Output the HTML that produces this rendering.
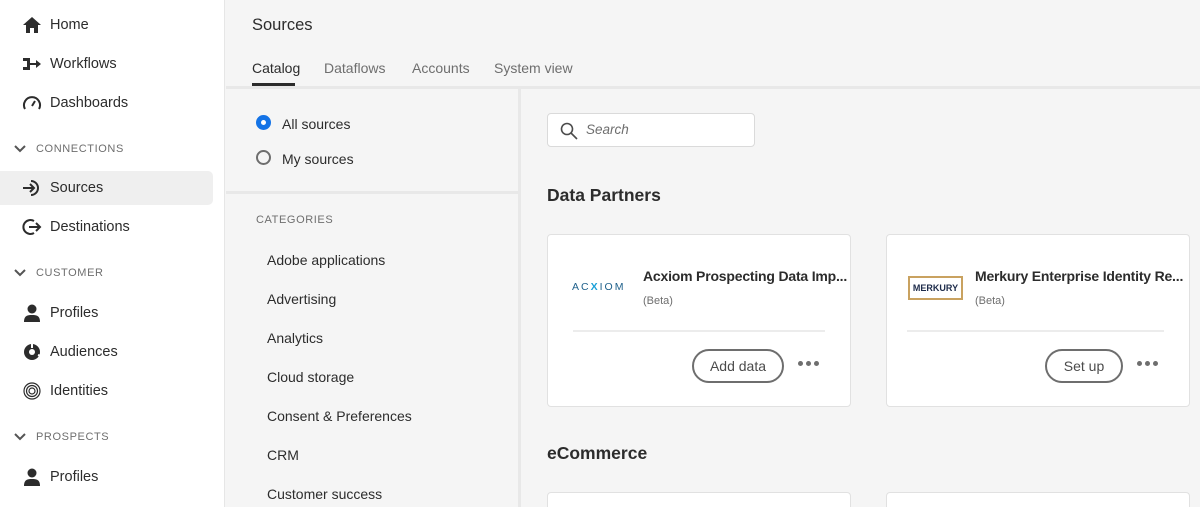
<!DOCTYPE html>
<html style="overflow:hidden;height:507px"><head><style>
*{box-sizing:border-box;margin:0;padding:0}
body{width:1200px;height:507px;overflow:hidden;font-family:"Liberation Sans",sans-serif;background:#f5f5f5;position:relative;color:#2c2c2c}
.side{position:absolute;left:0;top:0;width:225px;height:507px;background:#fff;border-right:1px solid #e6e6e6}
.it{position:absolute;left:0;height:34px;width:213px;display:flex;align-items:center;font-size:14.5px;color:#2c2c2c}
.it svg{position:absolute;left:22px}
.it span{position:absolute;left:50px;top:9px}
.sel{background:#efefef;border-radius:0 5px 5px 0}
.hd{position:absolute;left:14px;font-size:11px;letter-spacing:.6px;color:#6e6e6e;display:flex;align-items:center}
.hd b{font-weight:normal}
.abs{position:absolute}
.cat{position:absolute;left:267px;font-size:14px;color:#2c2c2c}
.card{position:absolute;background:#fff;border:1px solid #e1e1e1;border-radius:4px}
.ttl{position:absolute;font-size:14px;font-weight:bold;color:#2c2c2c;white-space:nowrap;overflow:hidden;text-overflow:ellipsis;letter-spacing:-.2px}
.beta{position:absolute;font-size:11px;color:#6e6e6e}
.btn{position:absolute;height:34px;border:2px solid #6e6e6e;border-radius:17px;font-size:14px;color:#4b4b4b;display:flex;align-items:center;justify-content:center}
.dots{position:absolute;top:126px;display:flex;gap:3px}
.dots i{width:5px;height:5px;border-radius:50%;background:#6e6e6e}
.hr{position:absolute;height:2px;background:#ececec}
</style></head><body>
<div class="side">
 <div class="it" style="top:8px"><svg width="20" height="18" viewBox="0 0 20 18"><path d="M10 1L1 9h3v8h4v-5h4v5h4V9h3z" fill="#2c2c2c"/></svg><span>Home</span></div>
 <div class="it" style="top:47px"><svg width="20" height="18" viewBox="0 0 20 18"><path d="M1 3h7v12H1v-3h4V6H1z M8 8h6V5l5 4-5 4v-3H8z" fill="#2c2c2c"/></svg><span>Workflows</span></div>
 <div class="it" style="top:86px"><svg width="20" height="18" viewBox="0 0 20 18"><path d="M3 15A8 8 0 1 1 17 15" fill="none" stroke="#2c2c2c" stroke-width="2"/><path d="M10 12l3-5" stroke="#2c2c2c" stroke-width="2"/></svg><span>Dashboards</span></div>
 <div class="hd" style="top:143px"><svg width="12" height="8"><path d="M1 1l5 5 5-5" fill="none" stroke="#555" stroke-width="2"/></svg><b style="margin-left:10px">CONNECTIONS</b></div>
 <div class="it sel" style="top:171px"><svg width="20" height="20" viewBox="0 0 20 20"><path d="M9 3a7 7 0 1 1 0 14" fill="none" stroke="#2c2c2c" stroke-width="2"/><path d="M1 10h11M8 6l4 4-4 4" fill="none" stroke="#2c2c2c" stroke-width="2"/></svg><span>Sources</span></div>
 <div class="it" style="top:210px"><svg width="20" height="20" viewBox="0 0 20 20"><path d="M12 4a7 7 0 1 0 0 12" fill="none" stroke="#2c2c2c" stroke-width="2"/><path d="M7 10h11M14 6l4 4-4 4" fill="none" stroke="#2c2c2c" stroke-width="2"/></svg><span>Destinations</span></div>
 <div class="hd" style="top:267px"><svg width="12" height="8"><path d="M1 1l5 5 5-5" fill="none" stroke="#555" stroke-width="2"/></svg><b style="margin-left:10px">CUSTOMER</b></div>
 <div class="it" style="top:296px"><svg width="20" height="20" viewBox="0 0 20 20"><circle cx="10" cy="6" r="4.5" fill="#2c2c2c"/><path d="M2 19c0-6 3-7 8-7s8 1 8 7z" fill="#2c2c2c"/></svg><span>Profiles</span></div>
 <div class="it" style="top:335px"><svg width="20" height="20" viewBox="0 0 20 20"><circle cx="10" cy="10" r="8" fill="#2c2c2c"/><circle cx="10" cy="10" r="3" fill="#fff"/><path d="M10 2v4M16 13l3 1" stroke="#fff" stroke-width="2"/></svg><span>Audiences</span></div>
 <div class="it" style="top:374px"><svg width="20" height="20" viewBox="0 0 20 20" fill="none" stroke="#2c2c2c" stroke-width="1.2"><circle cx="10" cy="10" r="8"/><circle cx="10" cy="10" r="5.5"/><circle cx="10" cy="10" r="3"/></svg><span>Identities</span></div>
 <div class="hd" style="top:431px"><svg width="12" height="8"><path d="M1 1l5 5 5-5" fill="none" stroke="#555" stroke-width="2"/></svg><b style="margin-left:10px">PROSPECTS</b></div>
 <div class="it" style="top:460px"><svg width="20" height="20" viewBox="0 0 20 20"><circle cx="10" cy="6" r="4.5" fill="#2c2c2c"/><path d="M2 19c0-6 3-7 8-7s8 1 8 7z" fill="#2c2c2c"/></svg><span>Profiles</span></div>
</div>

<div class="abs" style="left:252px;top:16px;font-size:16.5px;color:#2c2c2c">Sources</div>
<div class="abs" style="left:252px;top:60px;font-size:14px;color:#2c2c2c">Catalog</div>
<div class="abs" style="left:252px;top:83px;width:43px;height:3px;background:#2c2c2c"></div>
<div class="abs" style="left:324px;top:60px;font-size:14px;color:#6e6e6e">Dataflows</div>
<div class="abs" style="left:412px;top:60px;font-size:14px;color:#6e6e6e">Accounts</div>
<div class="abs" style="left:494px;top:60px;font-size:14px;color:#6e6e6e">System view</div>
<div class="abs" style="left:226px;top:86px;width:974px;height:3px;background:#e8e8e8"></div>
<div class="abs" style="left:518px;top:89px;width:3px;height:418px;background:#e8e8e8"></div>
<div class="abs" style="left:226px;top:191px;width:292px;height:3px;background:#e8e8e8"></div>

<div class="abs" style="left:256px;top:115px;width:15px;height:15px;border-radius:50%;background:#1473e6"><div style="position:absolute;left:5px;top:5px;width:5px;height:5px;border-radius:50%;background:#fff"></div></div>
<div class="abs" style="left:282px;top:116px;font-size:14px">All sources</div>
<div class="abs" style="left:256px;top:150px;width:15px;height:15px;border-radius:50%;border:2px solid #6e6e6e"></div>
<div class="abs" style="left:282px;top:151px;font-size:14px">My sources</div>
<div class="abs" style="left:256px;top:214px;font-size:11px;letter-spacing:.6px;color:#6e6e6e">CATEGORIES</div>
<div class="cat" style="top:252px">Adobe applications</div>
<div class="cat" style="top:291px">Advertising</div>
<div class="cat" style="top:330px">Analytics</div>
<div class="cat" style="top:369px">Cloud storage</div>
<div class="cat" style="top:408px">Consent &amp; Preferences</div>
<div class="cat" style="top:447px">CRM</div>
<div class="cat" style="top:486px">Customer success</div>

<div class="abs" style="left:547px;top:113px;width:208px;height:34px;background:#fff;border:1px solid #dadada;border-radius:4px"><svg class="abs" style="left:12px;top:8px" width="18" height="18" viewBox="0 0 18 18"><circle cx="7" cy="7" r="5.5" fill="none" stroke="#4b4b4b" stroke-width="1.6"/><path d="M11 11l6 6" stroke="#4b4b4b" stroke-width="1.6"/></svg><span class="abs" style="left:38px;top:8px;font-size:13.5px;font-style:italic;color:#6e6e6e">Search</span></div>
<div class="abs" style="left:547px;top:185px;font-size:17.5px;font-weight:bold;color:#2c2c2c">Data Partners</div>
<div class="abs" style="left:547px;top:443px;font-size:17.5px;font-weight:bold;color:#2c2c2c">eCommerce</div>

<div class="card" style="left:547px;top:234px;width:304px;height:173px">
 <div class="abs" style="left:24px;top:46px;font-size:10.5px;letter-spacing:2px;color:#1d5f8a">AC<b style="color:#1aa0d8">X</b>IOM</div>
 <div class="ttl" style="left:95px;top:33px;width:205px">Acxiom Prospecting Data Imp...</div>
 <div class="beta" style="left:95px;top:60px">(Beta)</div>
 <div class="hr" style="left:25px;top:95px;width:252px"></div>
 <div class="btn" style="left:144px;top:114px;width:92px">Add data</div>
 <div class="dots" style="left:250px"><i></i><i></i><i></i></div>
</div>
<div class="card" style="left:886px;top:234px;width:304px;height:173px">
 <div class="abs" style="left:21px;top:41px;width:55px;height:24px;border:2px solid #c9a260;font-size:9px;font-weight:bold;color:#1d2b4a;display:flex;align-items:center;justify-content:center">MERKURY</div>
 <div class="ttl" style="left:88px;top:33px;width:212px">Merkury Enterprise Identity Re...</div>
 <div class="beta" style="left:88px;top:60px">(Beta)</div>
 <div class="hr" style="left:20px;top:95px;width:257px"></div>
 <div class="btn" style="left:158px;top:114px;width:78px">Set up</div>
 <div class="dots" style="left:250px"><i></i><i></i><i></i></div>
</div>
<div class="card" style="left:547px;top:492px;width:304px;height:15px;border-bottom:none;border-radius:4px 4px 0 0"></div>
<div class="card" style="left:886px;top:492px;width:304px;height:15px;border-bottom:none;border-radius:4px 4px 0 0"></div>
</body></html>
